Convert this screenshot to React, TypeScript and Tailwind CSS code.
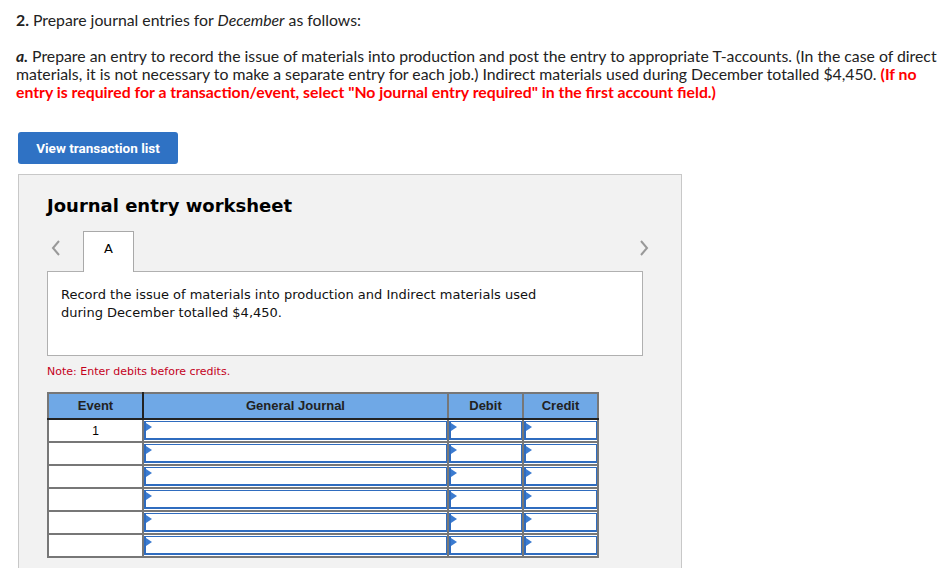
import React from 'react';

const rows = ['1', '', '', '', '', ''];

const InputCell: React.FC = () => (
  <td className="p-0 border-2 border-[#777] bg-white">
    <div className="relative h-[19px] border border-l-2 border-b-2 border-[#2f6cbf] bg-white">
      <span className="absolute left-0 top-[1px] w-0 h-0 border-y-[4px] border-y-transparent border-l-[6px] border-l-[#3b7bd0]" />
    </div>
  </td>
);

const App: React.FC = () => {
  return (
    <div className="w-[951px] h-[568px] overflow-hidden bg-white">
      {/* Question text */}
      <div className="pl-[16px] pr-[4px] pt-[11px] text-[15.8px] leading-[18px] text-[#222]" style={{ fontFamily: 'Lato, "Open Sans", sans-serif' }}>
        <p>
          <b>2.</b> Prepare journal entries for <i>December</i> as follows:
        </p>
        <p className="mt-[18px]">
          <b><i>a.</i></b> Prepare an entry to record the issue of materials into production and post the entry to appropriate T-accounts. (In the case of direct materials, it is not necessary to make a separate entry for each job.) Indirect materials used during December totalled $4,450.{' '}
          <b className="text-[#f00]">(If no entry is required for a transaction/event, select "No journal entry required" in the first account field.)</b>
        </p>
      </div>

      {/* Button */}
      <div className="pl-[18px] mt-[31px]">
        <button className="w-[160px] h-[32px] rounded-[3px] bg-[#2f72c4] text-white text-[13.5px] font-bold" style={{ fontFamily: 'Roboto, "Liberation Sans", sans-serif' }}>
          View transaction list
        </button>
      </div>

      {/* Worksheet panel */}
      <div className="ml-[18px] mt-[10px] w-[664px] h-[420px] bg-[#f2f2f2] border border-[#c8c8c8] pl-[28px] pt-[19px]" style={{ fontFamily: '"DejaVu Sans", Verdana, sans-serif' }}>
        <h2 className="text-[18px] font-bold text-black leading-[24px]">Journal entry worksheet</h2>

        <div className="w-[596px] mt-[12px]">
          {/* Tabs */}
          <div className="flex items-end h-[41px] relative">
            <div className="w-[36px] h-full flex items-center justify-start pl-[4px] pb-[6px]">
              <svg width="10" height="16" viewBox="0 0 10 16" fill="none" stroke="#999" strokeWidth="2">
                <path d="M8 1 L2 8 L8 15" />
              </svg>
            </div>
            <div className="w-[51px] h-[41px] bg-white border border-b-0 border-[#a9a9a9] flex items-start justify-center pt-[7px] text-[13px] text-black relative z-10 -mb-[1px]">
              A
            </div>
            <div className="flex-1" />
            <div className="h-full flex items-center pb-[6px] -mr-[6px]">
              <svg width="10" height="16" viewBox="0 0 10 16" fill="none" stroke="#999" strokeWidth="2">
                <path d="M2 1 L8 8 L2 15" />
              </svg>
            </div>
          </div>
          <div className="h-[85px] bg-white border border-[#b0b0b0] pl-[13px] pr-[80px] pt-[14px] text-[13px] leading-[18px] text-[#111]">
            Record the issue of materials into production and Indirect materials used during December totalled $4,450.
          </div>
        </div>

        <p className="mt-[9px] text-[11px] text-[#c4001c] leading-[14px]">Note: Enter debits before credits.</p>

        {/* Table */}
        <table className="mt-[13px] border-collapse border-2 border-[#777] text-[13px]" style={{ fontFamily: 'Arial, "Liberation Sans", sans-serif' }}>
          <thead>
            <tr className="h-[26px] bg-[#6fa8e6] text-[#222] font-bold">
              <th className="w-[95px] border-2 border-[#777] border-b-[#222] border-r-[#222] font-bold">Event</th>
              <th className="w-[305px] border-2 border-[#777] border-b-[#222] font-bold">General Journal</th>
              <th className="w-[75px] border-2 border-[#777] border-b-[#222] font-bold">Debit</th>
              <th className="w-[75px] border-2 border-[#777] border-b-[#222] font-bold">Credit</th>
            </tr>
          </thead>
          <tbody>
            {rows.map((ev, i) => (
              <tr key={i} className="h-[23px]">
                <td className="border-2 border-[#777] bg-white text-center text-[12px] text-black p-0">{ev}</td>
                <InputCell />
                <InputCell />
                <InputCell />
              </tr>
            ))}
          </tbody>
        </table>
      </div>
    </div>
  );
};

export default App;
